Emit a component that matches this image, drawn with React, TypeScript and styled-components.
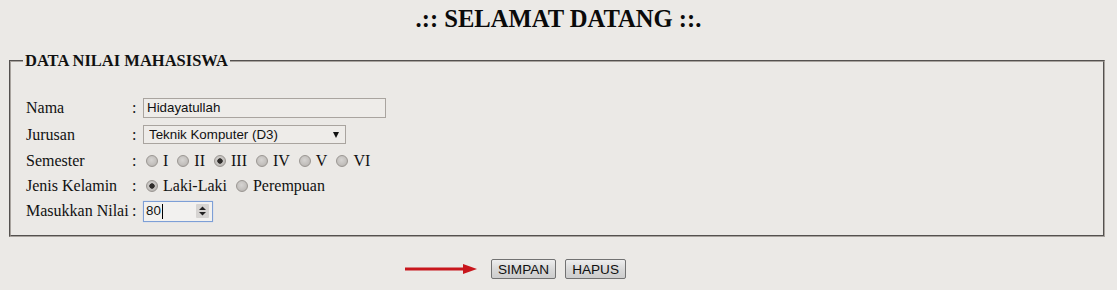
import React from "react";
import styled, { createGlobalStyle } from "styled-components";

const GlobalStyle = createGlobalStyle`
  html, body {
    margin: 0;
    padding: 0;
    background: #ebe9e6;
  }
  body {
    font-family: "Liberation Serif", "Times New Roman", serif;
    color: #111;
  }
`;

const Page = styled.div`
  width: 1117px;
  height: 290px;
  overflow: hidden;
  box-sizing: border-box;
  padding-top: 5px;
`;

const Title = styled.h1`
  margin: 0;
  text-align: center;
  font-size: 24.6px;
  line-height: 27px;
  font-weight: bold;
  color: #0a0a0a;
`;

const Box = styled.fieldset`
  margin: 20px 12px 0 9px;
  padding: 0 12px 11px;
  border: 2px groove #a8a39e;
  min-width: 0;
`;

const Legend = styled.legend`
  padding: 0 2px;
  font-size: 16.5px;
  font-weight: bold;
  line-height: 18px;
`;

const Form = styled.div`
  display: flex;
  flex-direction: column;
  margin: 24px 0 0 3px;
  font-size: 16px;
  line-height: 18px;
`;

const Row = styled.div<{ $h: number }>`
  display: grid;
  grid-template-columns: 106px 11px auto;
  align-items: center;
  height: ${(p) => p.$h}px;
`;

const Label = styled.span`
  white-space: nowrap;
`;

const Colon = styled.span``;

const Field = styled.div`
  display: flex;
  align-items: center;
`;

const ui = `"Liberation Sans", Arial, sans-serif`;

const TextInput = styled.input`
  box-sizing: border-box;
  width: 243px;
  height: 20px;
  margin: 0;
  padding: 0 3px;
  border: 1px solid #a9a49f;
  background: #eeece9;
  font-family: ${ui};
  font-size: 13.33px;
  color: #111;
  outline: none;
`;

const SelectBox = styled.div`
  position: relative;
  width: 203px;
  height: 19px;

  &::after {
    content: "";
    position: absolute;
    right: 7px;
    top: 7px;
    border-left: 3px solid transparent;
    border-right: 3px solid transparent;
    border-top: 6px solid #111;
    pointer-events: none;
  }
`;

const Select = styled.select`
  appearance: none;
  box-sizing: border-box;
  width: 100%;
  height: 100%;
  margin: 0;
  padding: 0 4px 0 5px;
  border: 1px solid #a9a49f;
  border-radius: 0;
  background: #eeece9;
  font-family: ${ui};
  font-size: 13.33px;
  color: #111;
  outline: none;
`;

const Options = styled.div`
  display: flex;
  align-items: center;
  gap: 6px;
`;

const Option = styled.label`
  display: flex;
  align-items: center;
  gap: 5px;
`;

const Radio = styled.input.attrs({ type: "radio" })`
  appearance: none;
  box-sizing: border-box;
  width: 12px;
  height: 12px;
  margin: 0 0 0 3px;
  border: 1px solid #9a9692;
  border-radius: 50%;
  background: radial-gradient(circle at 45% 40%, #d6d4d2 0, #c2bfbc 60%, #a9a5a1 100%);

  &:checked {
    background: radial-gradient(circle, #2e2c2a 0 2.4px, transparent 3px),
      radial-gradient(circle at 45% 40%, #d6d4d2 0, #c2bfbc 60%, #a9a5a1 100%);
  }
`;

const NumberBox = styled.div`
  box-sizing: border-box;
  width: 70px;
  height: 21px;
  display: flex;
  align-items: center;
  padding-left: 2px;
  border: 1px solid #7d9fd6;
  box-shadow: 0 0 1px #a9c3ea;
  background: #f2f1ef;
  font-family: ${ui};
  font-size: 13.33px;
  color: #111;
`;

const Caret = styled.span`
  width: 1px;
  height: 15px;
  margin-left: 1px;
  background: #000;
`;

const Spinner = styled.svg`
  margin-left: auto;
  margin-right: 3px;
`;

const ButtonBar = styled.div`
  display: flex;
  justify-content: center;
  margin-top: 22px;
`;

const Buttons = styled.div`
  position: relative;
  display: flex;
  gap: 9px;
`;

const Button = styled.button`
  box-sizing: border-box;
  height: 20px;
  margin: 0;
  padding: 0 6px;
  border: 1px solid #727272;
  border-radius: 2px;
  background: linear-gradient(#eeeeee, #d9d9d9 50%, #cdcdcd);
  font-family: ${ui};
  font-size: 13.6px;
  color: #111;
`;

const Arrow = styled.svg`
  position: absolute;
  right: calc(100% + 14px);
  top: 4px;
`;

const semesters = ["I", "II", "III", "IV", "V", "VI"];

export default function App() {
  return (
    <Page>
      <GlobalStyle />
      <Title>.:: SELAMAT DATANG ::.</Title>
      <Box>
        <Legend>DATA NILAI MAHASISWA</Legend>
        <Form>
          <Row $h={27}>
            <Label>Nama</Label>
            <Colon>:</Colon>
            <Field>
              <TextInput defaultValue="Hidayatullah" />
            </Field>
          </Row>
          <Row $h={27}>
            <Label>Jurusan</Label>
            <Colon>:</Colon>
            <Field>
              <SelectBox>
                <Select defaultValue="d3">
                  <option value="d3">Teknik Komputer (D3)</option>
                </Select>
              </SelectBox>
            </Field>
          </Row>
          <Row $h={26}>
            <Label>Semester</Label>
            <Colon>:</Colon>
            <Options>
              {semesters.map((s) => (
                <Option key={s}>
                  <Radio name="semester" defaultChecked={s === "III"} />
                  {s}
                </Option>
              ))}
            </Options>
          </Row>
          <Row $h={24}>
            <Label>Jenis Kelamin</Label>
            <Colon>:</Colon>
            <Options>
              <Option>
                <Radio name="jk" defaultChecked />
                Laki-Laki
              </Option>
              <Option>
                <Radio name="jk" />
                Perempuan
              </Option>
            </Options>
          </Row>
          <Row $h={26}>
            <Label>Masukkan Nilai</Label>
            <Colon>:</Colon>
            <Field>
              <NumberBox>
                80
                <Caret />
                <Spinner width="13" height="14" viewBox="0 0 13 14">
                  <rect x="0" y="0" width="13" height="14" rx="1" fill="#d6d4d2" />
                  <polygon points="3,6 6.5,2.5 10,6" fill="#222" />
                  <polygon points="3,8 6.5,11.5 10,8" fill="#222" />
                </Spinner>
              </NumberBox>
            </Field>
          </Row>
        </Form>
      </Box>
      <ButtonBar>
        <Buttons>
          <Arrow width="72" height="12" viewBox="0 0 72 12">
            <line x1="0" y1="6" x2="60" y2="6" stroke="#c8161c" strokeWidth="3" />
            <polygon points="58,1 72,6 58,11" fill="#c8161c" />
          </Arrow>
          <Button>SIMPAN</Button>
          <Button>HAPUS</Button>
        </Buttons>
      </ButtonBar>
    </Page>
  );
}
